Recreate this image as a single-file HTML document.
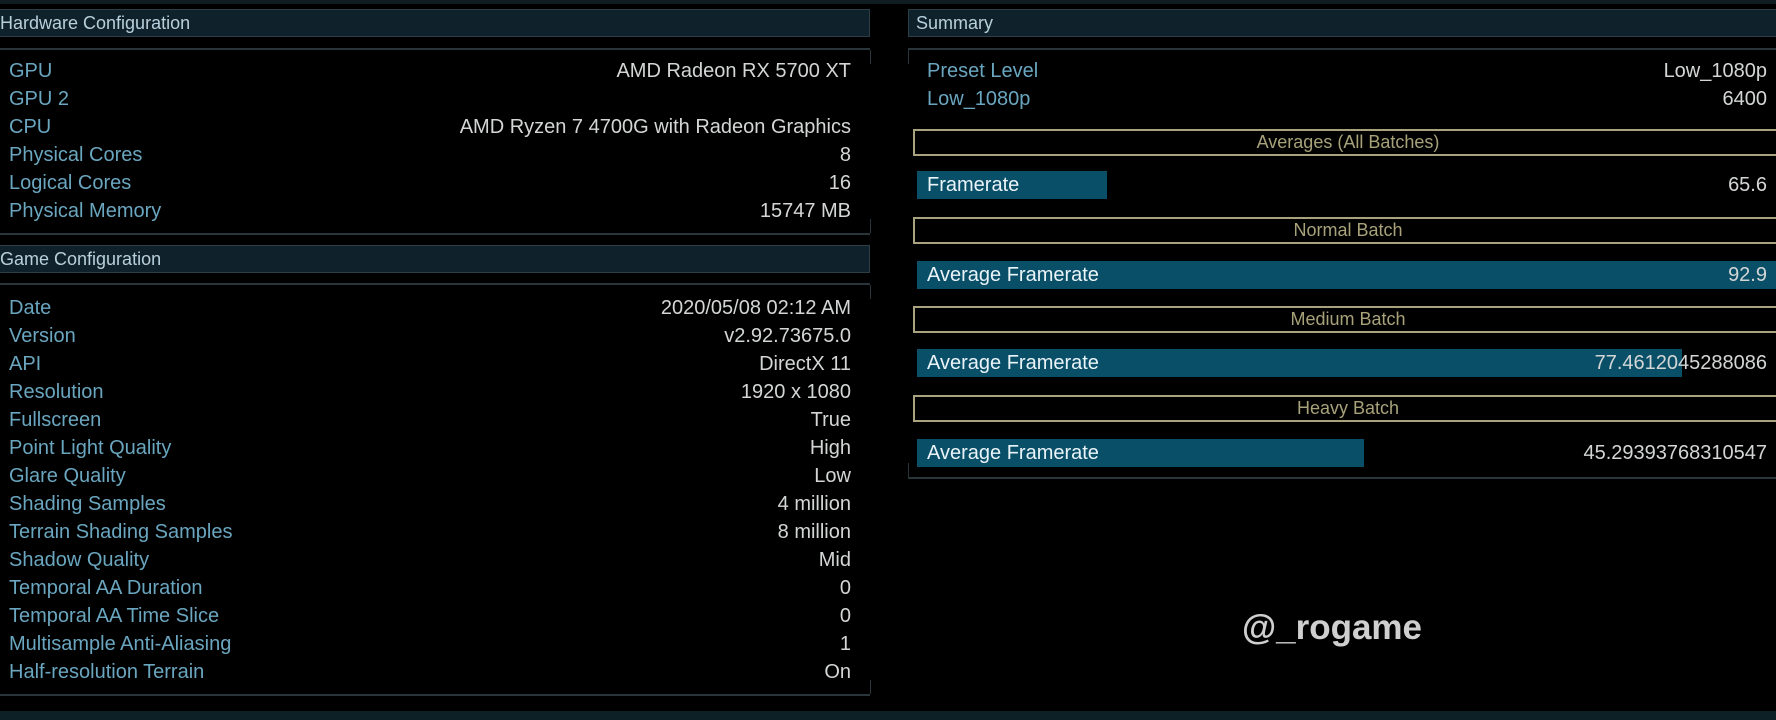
<!DOCTYPE html>
<html><head><meta charset="utf-8"><style>
*{margin:0;padding:0;box-sizing:border-box}
body{width:1776px;height:720px;background:#000;position:relative;overflow:hidden;font-family:"Liberation Sans",sans-serif}
.strip{position:absolute;left:0;right:0}
.hdr{position:absolute;height:28px;background:#0f222b;border:1px solid #2e3e46;color:#b8d0dc;font-size:18px;line-height:26px;padding-left:0}
.panel{position:absolute;border-top:2px solid #2a353b;border-bottom:2px solid #2a353b}
.tickR:before,.tickR:after{content:"";position:absolute;right:-1px;width:1px;height:14px;background:#2a353b}
.tickR:before{top:0}.tickR:after{bottom:0}
.tickL:before,.tickL:after{content:"";position:absolute;left:0;width:1px;height:14px;background:#2a353b}
.tickL:before{top:0}.tickL:after{bottom:0}
.row{position:absolute;left:9px;width:842px;height:28px;font-size:20px;line-height:28px;margin-top:2px}
.row .l{color:#6aa6bf;float:left}
.row .v{color:#d4d6d6;float:right}
.row.r{left:927px;width:840px}
.box{position:absolute;left:913px;width:870px;border:2px solid #a9a27f;color:#a8a27a;font-size:18px;text-align:center;line-height:22px;height:27px}
.bar{position:absolute;left:917px;background:#0a4f68;height:28px}
.bt{position:absolute;left:927px;color:#eaf4f8;font-size:20px;line-height:28px}
.bv{position:absolute;right:9px;color:#d4d6d6;font-size:20px;line-height:28px}
</style></head><body>
<div class="strip" style="top:0;height:4px;background:#0f1c22"></div>
<div class="strip" style="top:711px;height:9px;background:#0c2026"></div>

<div class="hdr" style="left:-1px;top:9px;width:871px">Hardware Configuration</div>
<div class="panel tickR" style="left:0;top:48px;width:870px;height:187px"></div>
<div class="row" style="top:55px"><span class="l">GPU</span><span class="v">AMD Radeon RX 5700 XT</span></div>
<div class="row" style="top:83px"><span class="l">GPU 2</span></div>
<div class="row" style="top:111px"><span class="l">CPU</span><span class="v">AMD Ryzen 7 4700G with Radeon Graphics</span></div>
<div class="row" style="top:139px"><span class="l">Physical Cores</span><span class="v">8</span></div>
<div class="row" style="top:167px"><span class="l">Logical Cores</span><span class="v">16</span></div>
<div class="row" style="top:195px"><span class="l">Physical Memory</span><span class="v">15747 MB</span></div>

<div class="hdr" style="left:-1px;top:245px;width:871px">Game Configuration</div>
<div class="panel tickR" style="left:0;top:283px;width:870px;height:413px"></div>
<div class="row" style="top:292px"><span class="l">Date</span><span class="v">2020/05/08 02:12 AM</span></div>
<div class="row" style="top:320px"><span class="l">Version</span><span class="v">v2.92.73675.0</span></div>
<div class="row" style="top:348px"><span class="l">API</span><span class="v">DirectX 11</span></div>
<div class="row" style="top:376px"><span class="l">Resolution</span><span class="v">1920 x 1080</span></div>
<div class="row" style="top:404px"><span class="l">Fullscreen</span><span class="v">True</span></div>
<div class="row" style="top:432px"><span class="l">Point Light Quality</span><span class="v">High</span></div>
<div class="row" style="top:460px"><span class="l">Glare Quality</span><span class="v">Low</span></div>
<div class="row" style="top:488px"><span class="l">Shading Samples</span><span class="v">4 million</span></div>
<div class="row" style="top:516px"><span class="l">Terrain Shading Samples</span><span class="v">8 million</span></div>
<div class="row" style="top:544px"><span class="l">Shadow Quality</span><span class="v">Mid</span></div>
<div class="row" style="top:572px"><span class="l">Temporal AA Duration</span><span class="v">0</span></div>
<div class="row" style="top:600px"><span class="l">Temporal AA Time Slice</span><span class="v">0</span></div>
<div class="row" style="top:628px"><span class="l">Multisample Anti-Aliasing</span><span class="v">1</span></div>
<div class="row" style="top:656px"><span class="l">Half-resolution Terrain</span><span class="v">On</span></div>

<div class="hdr" style="left:908px;top:9px;width:870px;padding-left:7px">Summary</div>
<div class="panel tickL" style="left:908px;top:48px;width:868px;height:431px"></div>
<div class="row r" style="top:55px"><span class="l">Preset Level</span><span class="v">Low_1080p</span></div>
<div class="row r" style="top:83px"><span class="l">Low_1080p</span><span class="v">6400</span></div>

<div class="box" style="top:129px">Averages (All Batches)</div>
<div class="bar" style="top:171px;width:190px"></div>
<div class="bt" style="top:171px">Framerate</div>
<div class="bv" style="top:171px">65.6</div>

<div class="box" style="top:217px">Normal Batch</div>
<div class="bar" style="top:261px;width:860px"></div>
<div class="bt" style="top:261px">Average Framerate</div>
<div class="bv" style="top:261px">92.9</div>

<div class="box" style="top:306px">Medium Batch</div>
<div class="bar" style="top:349px;width:765px"></div>
<div class="bt" style="top:349px">Average Framerate</div>
<div class="bv" style="top:349px">77.4612045288086</div>

<div class="box" style="top:395px">Heavy Batch</div>
<div class="bar" style="top:439px;width:447px"></div>
<div class="bt" style="top:439px">Average Framerate</div>
<div class="bv" style="top:439px">45.29393768310547</div>

<div style="position:absolute;left:1232px;top:606px;width:200px;text-align:center;color:#cfcfcf;font-weight:bold;font-size:35px;line-height:44px">@_rogame</div>
</body></html>
